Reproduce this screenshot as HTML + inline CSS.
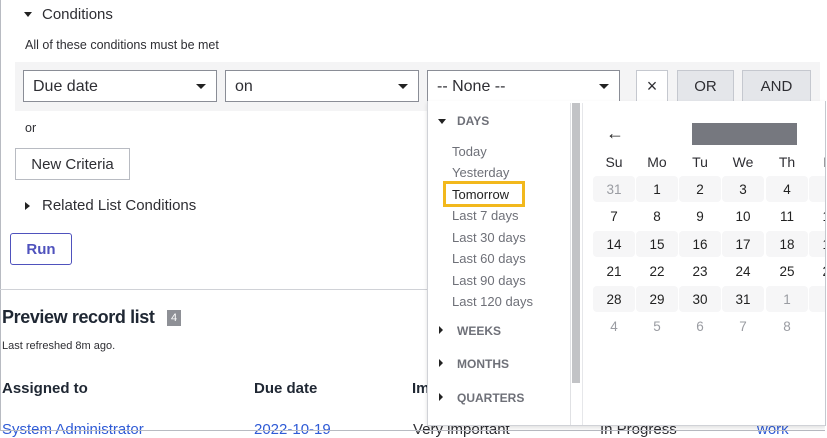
<!DOCTYPE html>
<html><head><style>
*{box-sizing:border-box;margin:0;padding:0}
body{width:827px;height:431px;overflow:hidden;background:#fff;font-family:"Liberation Sans",sans-serif;position:relative;color:#2e2e33}
.a{position:absolute;white-space:nowrap}
.sel{position:absolute;top:70px;height:32px;border:1px solid #8a8d96;background:#fff;font-size:16px;padding:7px 9px;color:#2e2e33}
.sel:after{content:"";position:absolute;right:10px;top:13px;border-left:5px solid transparent;border-right:5px solid transparent;border-top:5px solid #222}
.btn{position:absolute;top:70px;height:32px;border:1px solid #c5c8cf;background:#e4e6ea;font-size:15px;text-align:center;line-height:31px;color:#2e2e33}
.tri{position:absolute;border-top:4px solid transparent;border-bottom:4px solid transparent;border-left:5px solid #222}
.trd{position:absolute;border-left:4px solid transparent;border-right:4px solid transparent;border-top:5px solid #222}
.li{position:absolute;left:452px;font-size:13px;color:#6e7078;top:1px}
.hd{position:absolute;left:457px;font-size:12px;font-weight:bold;color:#6e7078}
.cal{position:absolute;left:593px;font-size:13.5px;color:#222}
.row{position:absolute;left:593px;height:26px;width:240px}
.c{position:absolute;width:42px;height:26px;text-align:center;line-height:27px;border-radius:4px}
.sh .c{background:#f6f6f7}
.g{color:#9a9ca2}
</style></head><body>
<div class="a" style="left:0;top:0;width:1px;height:431px;background:#b8bbc2"></div>
<div class="trd" style="left:24px;top:12px"></div>
<div class="a" style="left:42px;top:6px;font-size:15px">Conditions</div>
<div class="a" style="left:25px;top:38px;font-size:12.5px">All of these conditions must be met</div>
<div class="a" style="left:15px;top:62px;width:805px;height:49px;background:#f4f4f5"></div>
<div class="sel" style="left:23px;width:194px">Due date</div>
<div class="sel" style="left:225px;width:194px">on</div>
<div class="sel" style="left:427px;width:193px">-- None --</div>
<div class="btn" style="left:636px;width:32px;background:#fff;font-size:18px">×</div>
<div class="btn" style="left:677px;width:57px">OR</div>
<div class="btn" style="left:742px;width:69px">AND</div>
<div class="a" style="left:25px;top:121px;font-size:12.5px">or</div>
<div class="a" style="left:15px;top:148px;width:115px;height:32px;border:1px solid #b8bbc2;font-size:15px;text-align:center;line-height:31px">New Criteria</div>
<div class="tri" style="left:25px;top:202px"></div>
<div class="a" style="left:42px;top:197px;font-size:15px">Related List Conditions</div>
<div class="a" style="left:10px;top:233px;width:62px;height:32px;border:1px solid #4f52bd;border-radius:3px;color:#4f52bd;font-size:15px;text-align:center;line-height:31px;font-weight:bold">Run</div>
<div class="a" style="left:0;top:289px;width:430px;height:1px;background:#d0d2d7"></div>
<div class="a" style="left:2px;top:307px;font-size:18px;font-weight:bold;color:#1f2733;letter-spacing:-0.4px">Preview record list</div>
<div class="a" style="left:167px;top:310px;width:14px;height:16px;background:#8e9096;color:#fff;font-size:11px;text-align:center;line-height:16px">4</div>
<div class="a" style="left:2px;top:340px;font-size:11px">Last refreshed 8m ago.</div>
<div class="a" style="left:2px;top:380px;font-size:15px;font-weight:bold;color:#1f2733">Assigned to</div>
<div class="a" style="left:254px;top:380px;font-size:15px;font-weight:bold;color:#1f2733">Due date</div>
<div class="a" style="left:412px;top:380px;font-size:15px;font-weight:bold;color:#1f2733">Im</div>
<div class="a" style="left:2px;top:421px;font-size:15px;color:#2f5bd6">System Administrator</div>
<div class="a" style="left:254px;top:421px;font-size:15px;color:#2f5bd6">2022-10-19</div>
<div class="a" style="left:413px;top:421px;font-size:15px">Very important</div>
<div class="a" style="left:600px;top:421px;font-size:15px">In Progress</div>
<div class="a" style="left:757px;top:421px;font-size:15px;color:#2f5bd6">work</div>
<div class="a" style="left:0;top:430px;width:827px;height:1px;background:#b8bbc2"></div>
<!-- dropdown -->
<div class="a" style="left:427px;top:101px;width:399px;height:325px;background:#fff;border-left:1px solid #d0d2d7;border-right:1px solid #c5c8cf;border-bottom:1px solid #d0d2d7;box-shadow:0 2px 4px rgba(0,0,0,.12)"></div>
<div class="a" style="left:570px;top:103px;width:1px;height:322px;background:#e0e1e4"></div>
<div class="a" style="left:572px;top:103px;width:8px;height:280px;background:#c2c3c6"></div>
<div class="a" style="left:582px;top:103px;width:1px;height:322px;background:#e6e7ea"></div>
<div class="trd" style="left:438px;top:119px"></div>
<div class="hd" style="top:114px">DAYS</div>
<div class="li" style="top:144px">Today</div>
<div class="li" style="top:165px">Yesterday</div>
<div class="a" style="left:443px;top:181px;width:82px;height:26px;border:3px solid #f2b81c"></div>
<div class="li" style="top:187px;color:#222">Tomorrow</div>
<div class="li" style="top:208px">Last 7 days</div>
<div class="li" style="top:230px">Last 30 days</div>
<div class="li" style="top:251px">Last 60 days</div>
<div class="li" style="top:273px">Last 90 days</div>
<div class="li" style="top:294px">Last 120 days</div>
<div class="tri" style="left:439px;top:326px;border-left-width:4px"></div>
<div class="hd" style="top:324px">WEEKS</div>
<div class="tri" style="left:439px;top:359px;border-left-width:4px"></div>
<div class="hd" style="top:357px">MONTHS</div>
<div class="tri" style="left:439px;top:393px;border-left-width:4px"></div>
<div class="hd" style="top:391px">QUARTERS</div>
<div class="a" style="left:606px;top:123px;font-size:18px;color:#222">←</div>
<div class="a" style="left:692px;top:123px;width:105px;height:22px;background:#76787f"></div>
<div class="row" style="top:149px;font-size:14px">
<div class="c" style="left:0">Su</div><div class="c" style="left:43px">Mo</div><div class="c" style="left:86px">Tu</div><div class="c" style="left:129px">We</div><div class="c" style="left:173px">Th</div><div class="c" style="left:216px">Fr</div></div>
<div class="row sh cal" style="top:176px"><div class="c g" style="left:0">31</div><div class="c" style="left:43px">1</div><div class="c" style="left:86px">2</div><div class="c" style="left:129px">3</div><div class="c" style="left:173px">4</div><div class="c" style="left:216px">5</div></div>
<div class="row cal" style="top:203px"><div class="c" style="left:0">7</div><div class="c" style="left:43px">8</div><div class="c" style="left:86px">9</div><div class="c" style="left:129px">10</div><div class="c" style="left:173px">11</div><div class="c" style="left:216px">12</div></div>
<div class="row sh cal" style="top:231px"><div class="c" style="left:0">14</div><div class="c" style="left:43px">15</div><div class="c" style="left:86px">16</div><div class="c" style="left:129px">17</div><div class="c" style="left:173px">18</div><div class="c" style="left:216px">19</div></div>
<div class="row cal" style="top:258px"><div class="c" style="left:0">21</div><div class="c" style="left:43px">22</div><div class="c" style="left:86px">23</div><div class="c" style="left:129px">24</div><div class="c" style="left:173px">25</div><div class="c" style="left:216px">26</div></div>
<div class="row sh cal" style="top:286px"><div class="c" style="left:0">28</div><div class="c" style="left:43px">29</div><div class="c" style="left:86px">30</div><div class="c" style="left:129px">31</div><div class="c g" style="left:173px">1</div><div class="c g" style="left:216px">2</div></div>
<div class="row cal" style="top:313px"><div class="c g" style="left:0">4</div><div class="c g" style="left:43px">5</div><div class="c g" style="left:86px">6</div><div class="c g" style="left:129px">7</div><div class="c g" style="left:173px">8</div><div class="c g" style="left:216px">9</div></div>
<div class="a" style="left:825px;top:101px;width:2px;height:330px;background:#fff"></div>
<div class="a" style="left:825px;top:101px;width:1px;height:325px;background:#c5c8cf"></div>
</body></html>
